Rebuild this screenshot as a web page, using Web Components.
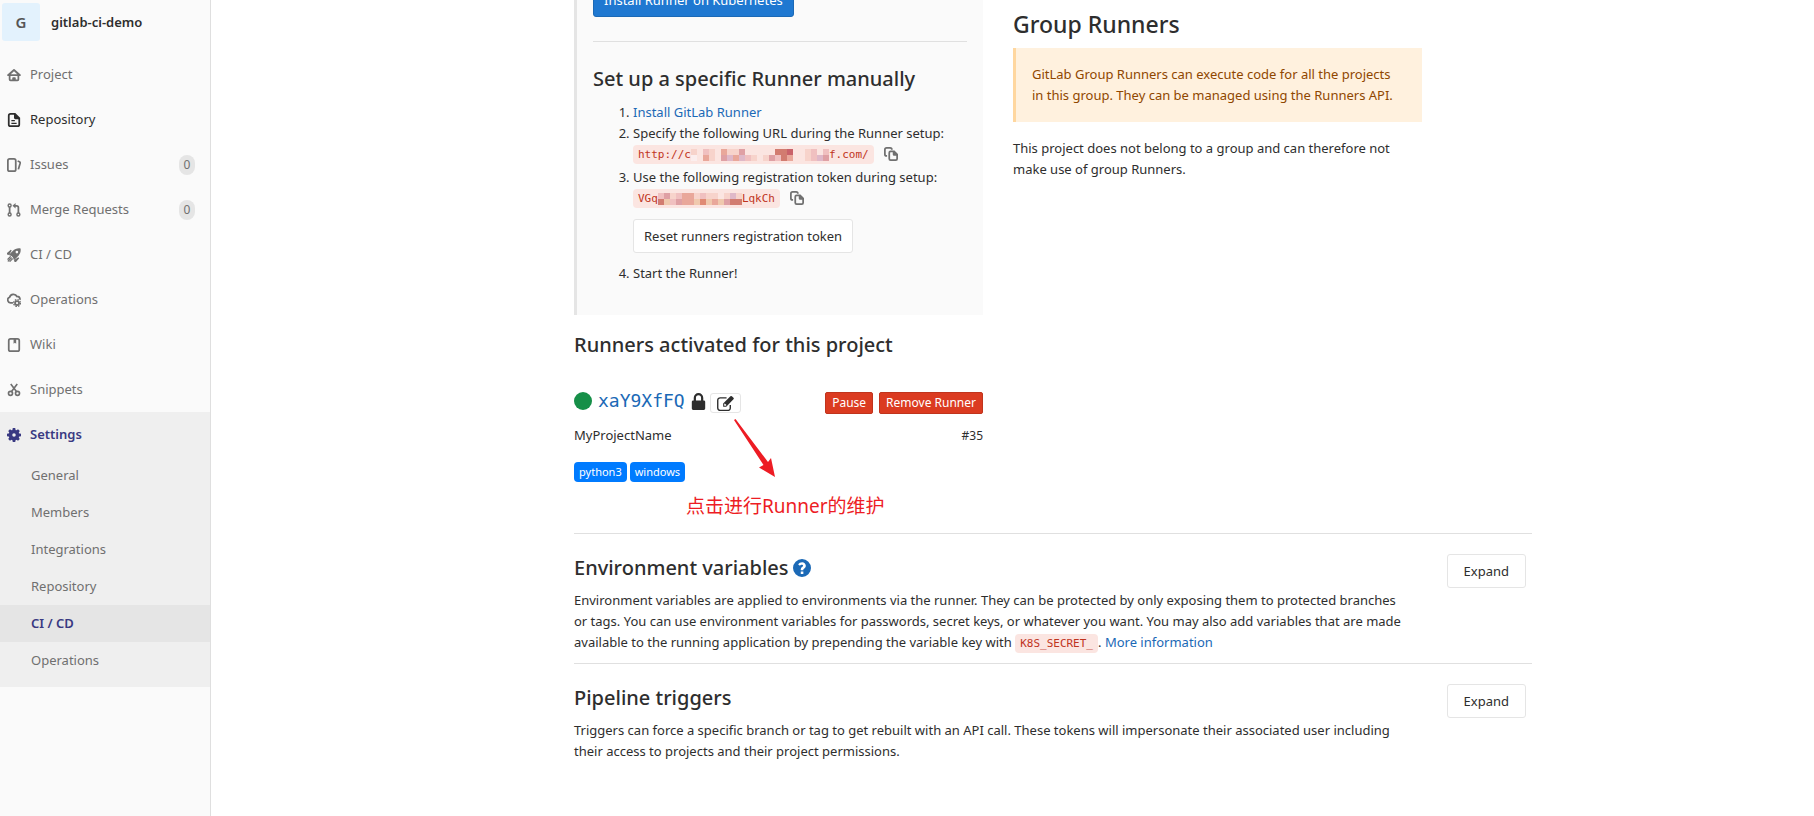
<!DOCTYPE html>
<html lang="en">
<head>
<meta charset="utf-8">
<title>CI / CD Settings · gitlab-ci-demo</title>
<style>
  html { height: 100%; }
  body {
    margin: 0;
    min-height: 100%;
    display: flex;
    background: #fff;
    color: #2e2e2e;
    font: 13px/21px "Noto Sans", "Noto Sans CJK SC", sans-serif;
  }
</style>
</head>
<body>
<ci-sidebar></ci-sidebar>
<ci-settings-page></ci-settings-page>

<script>
const ICONS = {
  home: '<path fill-rule="evenodd" d="M8 1.2a1 1 0 0 1 .7.3l6.8 6c.7.7.3 1.7-.6 1.7H14V13a2 2 0 0 1-2 2H4a2 2 0 0 1-2-2V9.200H1.100c-.9 0-1.300-1-.6-1.700l6.800-6a1 1 0 0 1 .7-.3zM8 3.800 4.300 7.200h7.400zM4 9.200V13h2v-1.500a1 1 0 0 1 1-1h2a1 1 0 0 1 1 1V13h2V9.200z"/>',
  doc: '<path fill-rule="evenodd" d="M4 0h5.500L15 5.500V13a3 3 0 0 1-3 3H4a3 3 0 0 1-3-3V3a3 3 0 0 1 3-3zm0 2a1 1 0 0 0-1 1v10a1 1 0 0 0 1 1h8a1 1 0 0 0 1-1V7H9.500A1.500 1.500 0 0 1 8 5.500V2z"/><path d="M5 8h4v1.500H5zM5 11h6v1.500H5z"/>',
  issues: '<path fill-rule="evenodd" d="M3 0h5a3 3 0 0 1 3 3v10a3 3 0 0 1-3 3H3a3 3 0 0 1-3-3V3a3 3 0 0 1 3-3zm0 2a1 1 0 0 0-1 1v10a1 1 0 0 0 1 1h5a1 1 0 0 0 1-1V3a1 1 0 0 0-1-1z"/><path d="M12.200 3.500l2 .8c.7.300 1 .9.800 1.700l-2 7" fill="none" stroke="currentColor" stroke-width="2"/>',
  merge: '<g fill="none" stroke="currentColor" stroke-width="1.600"><circle cx="3" cy="2.800" r="1.700"/><circle cx="3" cy="13.200" r="1.700"/><circle cx="13" cy="13.200" r="1.700"/><path d="M3 4.500v7M13 11.500V5.200a2 2 0 0 0-2-2H8.500" stroke-width="2"/></g><path d="M9.800 0v6.400L6.200 3.200z"/>',
  rocket: '<path fill-rule="evenodd" d="M15.500.5c.6 3.500-.5 6.500-3 9L8 14l-1.200-3.200-1.600-1.600L2 8l4.500-4.500c2.500-2.500 5.500-3.600 9-3zM11.300 3.200a1.500 1.500 0 1 0 0 3 1.500 1.500 0 0 0 0-3z"/><path d="M4.800 2.600 0 6.600l2 .6zM13.400 11.200l-4 4.800-.6-2zM3.800 10 1 12.800M5 11.300l-3.600 3.600M6.200 12.500l-2.800 2.800" stroke="currentColor" stroke-width="1.400" stroke-linecap="round"/>',
  cloud: '<path d="M6.200 11.200H4.300A3.300 3.300 0 0 1 3 4.800 4.500 4.500 0 0 1 11.400 4a3.500 3.500 0 0 1 3.500 3" fill="none" stroke="currentColor" stroke-width="2" stroke-linecap="round"/><circle cx="11.500" cy="11.500" r="2.300" fill="none" stroke="currentColor" stroke-width="2"/><circle cx="11.500" cy="11.500" r="3.900" fill="none" stroke="currentColor" stroke-width="1.500" stroke-dasharray="1.750 1.313"/>',
  book: '<path fill-rule="evenodd" d="M4 0h8a3 3 0 0 1 3 3v10a3 3 0 0 1-3 3H4a3 3 0 0 1-3-3V3a3 3 0 0 1 3-3zm0 2a1 1 0 0 0-1 1v10a1 1 0 0 0 1 1h8a1 1 0 0 0 1-1V3a1 1 0 0 0-1-1h-1.500v4.500L9 5.500 7.500 6.500V2z"/>',
  scissors: '<g fill="none" stroke="currentColor" stroke-width="1.900"><circle cx="4" cy="11.800" r="2.300"/><circle cx="12" cy="11.800" r="2.300"/><path d="M4.300 1.200 11 10M11.700 1.200 5 10"/></g>',
  gear: '<circle cx="8" cy="8" r="4" fill="none" stroke="currentColor" stroke-width="4"/><path d="M6.600 0h2.800l.6 3H6zM6.600 16h2.800l.6-3H6zM0 6.600v2.800l3 .6V6zM16 6.600v2.800l-3 .6V6zM1.400 3.400l2-2 2.500 1.700-2.800 2.800zM14.600 3.400l-2-2-2.500 1.700 2.800 2.800zM1.400 12.600l2 2 2.500-1.700-2.800-2.800zM14.600 12.600l-2 2-2.500-1.700 2.800-2.800z"/>',
  copy: '<path d="M3.500 10.200H3a2 2 0 0 1-2-2V3a2 2 0 0 1 2-2h4a2 2 0 0 1 2 2" fill="none" stroke="currentColor" stroke-width="2"/><path fill-rule="evenodd" d="M7.500 4H12l4 4v5.500a2.500 2.500 0 0 1-2.500 2.500h-6A2.500 2.500 0 0 1 5 13.500v-7A2.500 2.500 0 0 1 7.500 4zm0 2a.5.500 0 0 0-.5.500v7a.5.500 0 0 0 .5.500h6a.5.500 0 0 0 .5-.5V10h-2.500A1.500 1.500 0 0 1 10 8.500V6z"/>',
  dot: '<circle cx="8" cy="8" r="8"/>',
  lock: '<path fill-rule="evenodd" d="M3.500 7V4.700a4.500 4.700 0 0 1 9 0V7h.5a1.300 1.300 0 0 1 1.300 1.300v6.400A1.300 1.300 0 0 1 13 16H3a1.300 1.300 0 0 1-1.300-1.300V8.300A1.300 1.300 0 0 1 3 7zM5.600 7h4.800V4.700a2.400 2.600 0 0 0-4.800 0z"/>',
  pencil: '<path d="M12.500 9.500v2.700a2.300 2.300 0 0 1-2.300 2.300H3A2.300 2.300 0 0 1 .7 12.200V5A2.300 2.300 0 0 1 3 2.700h6" fill="none" stroke="currentColor" stroke-width="1.300"/><path fill-rule="evenodd" d="M12.600 1.200a1 1 0 0 1 1.400 0l1.500 1.500a1 1 0 0 1 0 1.400L8.700 11H5.800V8zm-5.800 7.200V10h1.600l.5-.5-1.600-1.600z"/>',
  help: '<path fill-rule="evenodd" d="M8 0a8 8 0 1 1 0 16A8 8 0 0 1 8 0zM6.900 11v2.300h2.300V11zM8.200 2.800c-1.700 0-2.800.7-3.600 2l1.600 1.300c.5-.7.900-1 1.600-1 .6 0 1.200.300 1.200.900 0 .9-2.100 1.100-2.100 3.200v.8h2.300v-.5c0-1 2.200-1.200 2.200-3.500 0-1.900-1.600-3.200-3.200-3.200z"/>'
};

function define(name, html, setup) {
  const template = document.createElement('template');
  template.innerHTML = html;
  customElements.define(name, class extends HTMLElement {
    static observedAttributes = ['name'];
    constructor() {
      super();
      this.attachShadow({ mode: 'open' }).append(template.content.cloneNode(true));
    }
    connectedCallback() { if (setup) setup(this, this.shadowRoot); }
    attributeChangedCallback() { if (setup && this.isConnected) setup(this, this.shadowRoot); }
  });
}

define('ci-icon', `
<style>
  :host { display: inline-block; width: var(--size, 14px); height: var(--size, 14px); flex: none; }
  svg { display: block; width: 100%; height: 100%; fill: currentColor; }
</style>
<svg viewBox="0 0 16 16" aria-hidden="true"></svg>`,
(host, root) => { root.querySelector('svg').innerHTML = ICONS[host.getAttribute('name')] || ''; });

define('ci-button', `
<style>
  :host { display: inline-block; }
  button {
    display: block; box-sizing: border-box; height: 34px; padding: 0 10px;
    border: 1px solid #e5e5e5; border-radius: 3px; background: #fff; color: #2e2e2e;
    font: inherit; line-height: 20px; white-space: nowrap; cursor: pointer;
  }
  :host([kind=primary]) button { background: #1f78d1; border-color: #1b69b6; color: #fff; }
  :host([kind=danger]) button { height: 22px; padding: 0 6px; font-size: 12px; line-height: 16px;
    background: #db3b21; border-color: #c0341d; color: #fff; border-radius: 2px; }
  :host([kind=wide]) button { padding: 0 16px; }
  :host([kind=icon]) button { display: flex; align-items: center; height: 20px; padding: 0 6px; }
  :host([kind=plain]) button { display: flex; align-items: center; height: 18px; padding: 0; border: 0; background: none; color: #707070; }
</style>
<button type="button"><slot></slot></button>`,
(host, root) => {
  const label = host.getAttribute('label');
  if (label) root.querySelector('button').setAttribute('aria-label', label);
});

define('ci-nav-item', `
<style>
  :host { display: block; color: #707070; }
  :host([dark]) { color: #2e2e2e; }
  :host([active]) { color: #393982; font-weight: 600; }
  a { display: flex; align-items: center; height: 45px; padding: 0 15px 0 7px; color: inherit; text-decoration: none; }
  ci-icon { margin-right: 9px; }
  .label { flex: 1; }
  .badge { width: 16px; border-radius: 10px; background: #e5e5e5; font-size: 12px; line-height: 20px; text-align: center; }
  .badge:empty { display: none; }
</style>
<a href="#"><ci-icon></ci-icon><span class="label"><slot></slot></span><span class="badge"></span></a>`,
(host, root) => {
  root.querySelector('ci-icon').setAttribute('name', host.getAttribute('icon'));
  root.querySelector('.badge').textContent = host.getAttribute('count') || '';
});

define('ci-sub-item', `
<style>
  :host { display: block; color: #707070; }
  :host([active]) { background: #e5e5e5; color: #393982; font-weight: 600; }
  a { display: block; padding: 0 16px 0 31px; line-height: 37px; color: inherit; text-decoration: none; }
</style>
<a href="#"><slot></slot></a>`);

define('ci-sidebar', `
<style>
  :host { display: block; box-sizing: border-box; width: 211px; flex: none; background: #fafafa; border-right: 1px solid #dfdfdf; }
  header { display: flex; align-items: center; gap: 11px; padding: 3px 2px 11px; }
  .avatar { width: 38px; border-radius: 3px; background: #e3f2fd; color: #555; font-size: 15px; font-weight: 600; line-height: 38px; text-align: center; }
  .name { font-weight: 600; color: #2e2e2e; text-decoration: none; }
  .open { background: #efefef; padding-bottom: 8px; }
</style>
<header><span class="avatar">G</span><a class="name" href="#">gitlab-ci-demo</a></header>
<nav>
  <ci-nav-item icon="home">Project</ci-nav-item>
  <ci-nav-item icon="doc" dark>Repository</ci-nav-item>
  <ci-nav-item icon="issues" count="0">Issues</ci-nav-item>
  <ci-nav-item icon="merge" count="0">Merge Requests</ci-nav-item>
  <ci-nav-item icon="rocket">CI / CD</ci-nav-item>
  <ci-nav-item icon="cloud">Operations</ci-nav-item>
  <ci-nav-item icon="book">Wiki</ci-nav-item>
  <ci-nav-item icon="scissors">Snippets</ci-nav-item>
  <div class="open">
    <ci-nav-item icon="gear" active>Settings</ci-nav-item>
    <ci-sub-item>General</ci-sub-item>
    <ci-sub-item>Members</ci-sub-item>
    <ci-sub-item>Integrations</ci-sub-item>
    <ci-sub-item>Repository</ci-sub-item>
    <ci-sub-item active>CI / CD</ci-sub-item>
    <ci-sub-item>Operations</ci-sub-item>
  </div>
</nav>`);

define('ci-code', `
<style>
  :host { display: inline-block; vertical-align: middle; }
  code { display: flex; padding: 2px 5px; border-radius: 4px; background: #fbe5e1; color: #c0341d;
    font: 11px/15px "DejaVu Sans Mono", monospace; white-space: nowrap; }
</style>
<code><slot></slot></code>`);

/* Pixelated patch over a secret: each digit of a row picks a colour, a dot leaves the cell clear. */
const SHADES = ['#f7d3cb', '#f0c0c0', '#e9a79a', '#dfa0a4', '#d27c70', '#c9626a', '#dfb8c8', '#f0c9ae', '#e08a74', '#fbeeee'];
define('ci-mosaic', `
<style>
  :host { display: block; height: 12px; margin-top: 2px; }
  svg { display: block; height: 12px; }
</style>
<svg aria-hidden="true"></svg>`,
(host, root) => {
  const rows = host.getAttribute('rows').split('/');
  const svg = root.querySelector('svg');
  svg.setAttribute('width', rows[0].length * 6);
  svg.innerHTML = rows.map((row, y) => [...row].map((c, x) => c === '.' ? '' :
    `<rect x="${x * 6}" y="${y * 6}" width="6" height="6" fill="${SHADES[c]}"/>`).join('')).join('');
});

define('ci-setup-panel', `
<style>
  :host { display: block; padding: 0 16px 16px; border-left: 3px solid #e5e5e5; background: #fafafa; }
  hr { height: 1px; margin: 24px 0; border: 0; background: #e0e0e0; }
  h4 { margin: 0 0 10px; font-size: 20px; font-weight: 500; line-height: 26px; }
  ol { margin: 0; padding: 0 0 15px 40px; }
  a { color: #1b69b6; text-decoration: none; }
  .secret { display: flex; align-items: flex-start; gap: 10px; height: 22px; padding-top: 1px; }
  .reset { display: block; margin: 8px 0 10px; }
</style>
<ci-button kind="primary">Install Runner on Kubernetes</ci-button>
<hr>
<h4>Set up a specific Runner manually</h4>
<ol>
  <li><a href="#">Install GitLab Runner</a></li>
  <li>Specify the following URL during the Runner setup:
    <div class="secret">
      <ci-code>http://c<ci-mosaic rows="0.10.2003.....445..01.1/9.20.362610.03142..0163"></ci-mosaic>f.com/</ci-code>
      <ci-button kind="plain" label="Copy URL"><ci-icon name="copy"></ci-icon></ci-button>
    </div>
  </li>
  <li>Use the following registration token during setup:
    <div class="secret">
      <ci-code>VGq<ci-mosaic rows="1301220100.060/47132278727344"></ci-mosaic>LqkCh</ci-code>
      <ci-button kind="plain" label="Copy token"><ci-icon name="copy"></ci-icon></ci-button>
    </div>
    <ci-button class="reset">Reset runners registration token</ci-button>
  </li>
  <li>Start the Runner!</li>
</ol>`);

define('ci-callout', `
<style>
  :host { display: block; position: absolute; left: 112px; top: 31px; width: 200px; color: #ed1c24; pointer-events: none; }
  svg { display: block; width: 41px; height: 58px; margin-left: 48px; fill: #ed1c24; }
  p { margin: 15px 0 0; font-size: 19px; line-height: 28px; white-space: nowrap; }
</style>
<svg viewBox="0 0 41 58" aria-hidden="true"><path d="M0 1 1.500 0 34 43 37 39 41 58 25 48.500 29.500 46z"/></svg>
<p><slot></slot></p>`);

define('ci-runner', `
<style>
  :host { display: block; position: relative; }
  .row { display: flex; align-items: center; justify-content: space-between; }
  .who { display: flex; align-items: center; height: 24px; }
  .who a { margin: 0 5px 0 6px; color: #1b69b6; font: 18px/24px "DejaVu Sans Mono", monospace; text-decoration: none; }
  .state { --size: 18px; color: #168f48; }
  .lock { --size: 17px; margin-right: 3px; }
  .edit { --size: 17px; margin-top: 4px; }
  .actions { display: flex; gap: 6px; margin-top: 4px; }
  .meta { margin-top: 11px; }
  .meta small { font-size: 12px; }
  .tags { display: flex; gap: 3px; margin-top: 16px; }
  .tags span { padding: 0 5px; border-radius: 4px; background: #007bff; color: #fff; font-size: 11px; line-height: 20px; }
</style>
<div class="row">
  <div class="who">
    <ci-icon class="state" name="dot"></ci-icon>
    <a href="#">xaY9XfFQ</a>
    <ci-icon class="lock" name="lock"></ci-icon>
    <ci-button class="edit" kind="icon" label="Edit runner"><ci-icon name="pencil"></ci-icon></ci-button>
  </div>
  <div class="actions">
    <ci-button kind="danger">Pause</ci-button>
    <ci-button kind="danger">Remove Runner</ci-button>
  </div>
</div>
<div class="row meta"><span>MyProjectName</span><small>#35</small></div>
<div class="tags"><span>python3</span><span>windows</span></div>
<ci-callout>点击进行Runner的维护</ci-callout>`);

define('ci-group-runners', `
<style>
  :host { display: block; }
  h3 { margin: 0 0 9px; font-size: 23px; font-weight: 500; line-height: 30px; }
  .note { padding: 16px 24px 16px 16px; border-left: 3px solid #ffd79f; background: #fff1de; color: #8f4700; }
  p { margin: 0; }
  .note + p { margin-top: 16px; }
</style>
<h3>Group Runners</h3>
<div class="note"><p>GitLab Group Runners can execute code for all the projects in this group. They can be managed using the Runners API.</p></div>
<p>This project does not belong to a group and can therefore not make use of group Runners.</p>`);

define('ci-section', `
<style>
  :host { display: flex; align-items: flex-start; justify-content: space-between; padding: 20px 6px 10px 0; border-top: 1px solid #e0e0e0; }
  .text { max-width: 836px; }
  h4 { display: flex; align-items: center; gap: 4px; margin: 0 0 8px; font-size: 20px; font-weight: 500; line-height: 28px; }
  p { margin: 0; }
</style>
<div class="text"><h4><slot name="title"></slot></h4><p><slot></slot></p></div>
<ci-button kind="wide">Expand</ci-button>`);

define('ci-settings-page', `
<style>
  :host { display: grid; flex: 1; min-width: 0; grid-template-columns: 363fr minmax(0, 958px) 282fr; align-content: start; overflow: hidden; }
  main { grid-column: 2; }
  .columns { display: grid; grid-template-columns: repeat(2, minmax(0, 409px)); column-gap: 30px; padding-bottom: 51px; }
  ci-setup-panel { margin-top: -17px; }
  ci-group-runners { margin-top: 9px; }
  h4 { margin: 17px 0 30px; font-size: 20px; font-weight: 500; line-height: 26px; }
  a { color: #1b69b6; text-decoration: none; }
  .help { --size: 18px; display: flex; }
</style>
<main>
  <div class="columns">
    <div>
      <ci-setup-panel></ci-setup-panel>
      <h4>Runners activated for this project</h4>
      <ci-runner></ci-runner>
    </div>
    <ci-group-runners></ci-group-runners>
  </div>
  <ci-section>
    <span slot="title">Environment variables</span>
    <a slot="title" class="help" href="#" aria-label="Help"><ci-icon name="help"></ci-icon></a>
    Environment variables are applied to environments via the runner. They can be protected by only exposing them to protected branches or tags. You can use environment variables for passwords, secret keys, or whatever you want. You may also add variables that are made available to the running application by prepending the variable key with <ci-code>K8S_SECRET_</ci-code>. <a href="#">More information</a>
  </ci-section>
  <ci-section>
    <span slot="title">Pipeline triggers</span>
    Triggers can force a specific branch or tag to get rebuilt with an API call. These tokens will impersonate their associated user including their access to projects and their project permissions.
  </ci-section>
</main>`);
</script>
</body>
</html>
